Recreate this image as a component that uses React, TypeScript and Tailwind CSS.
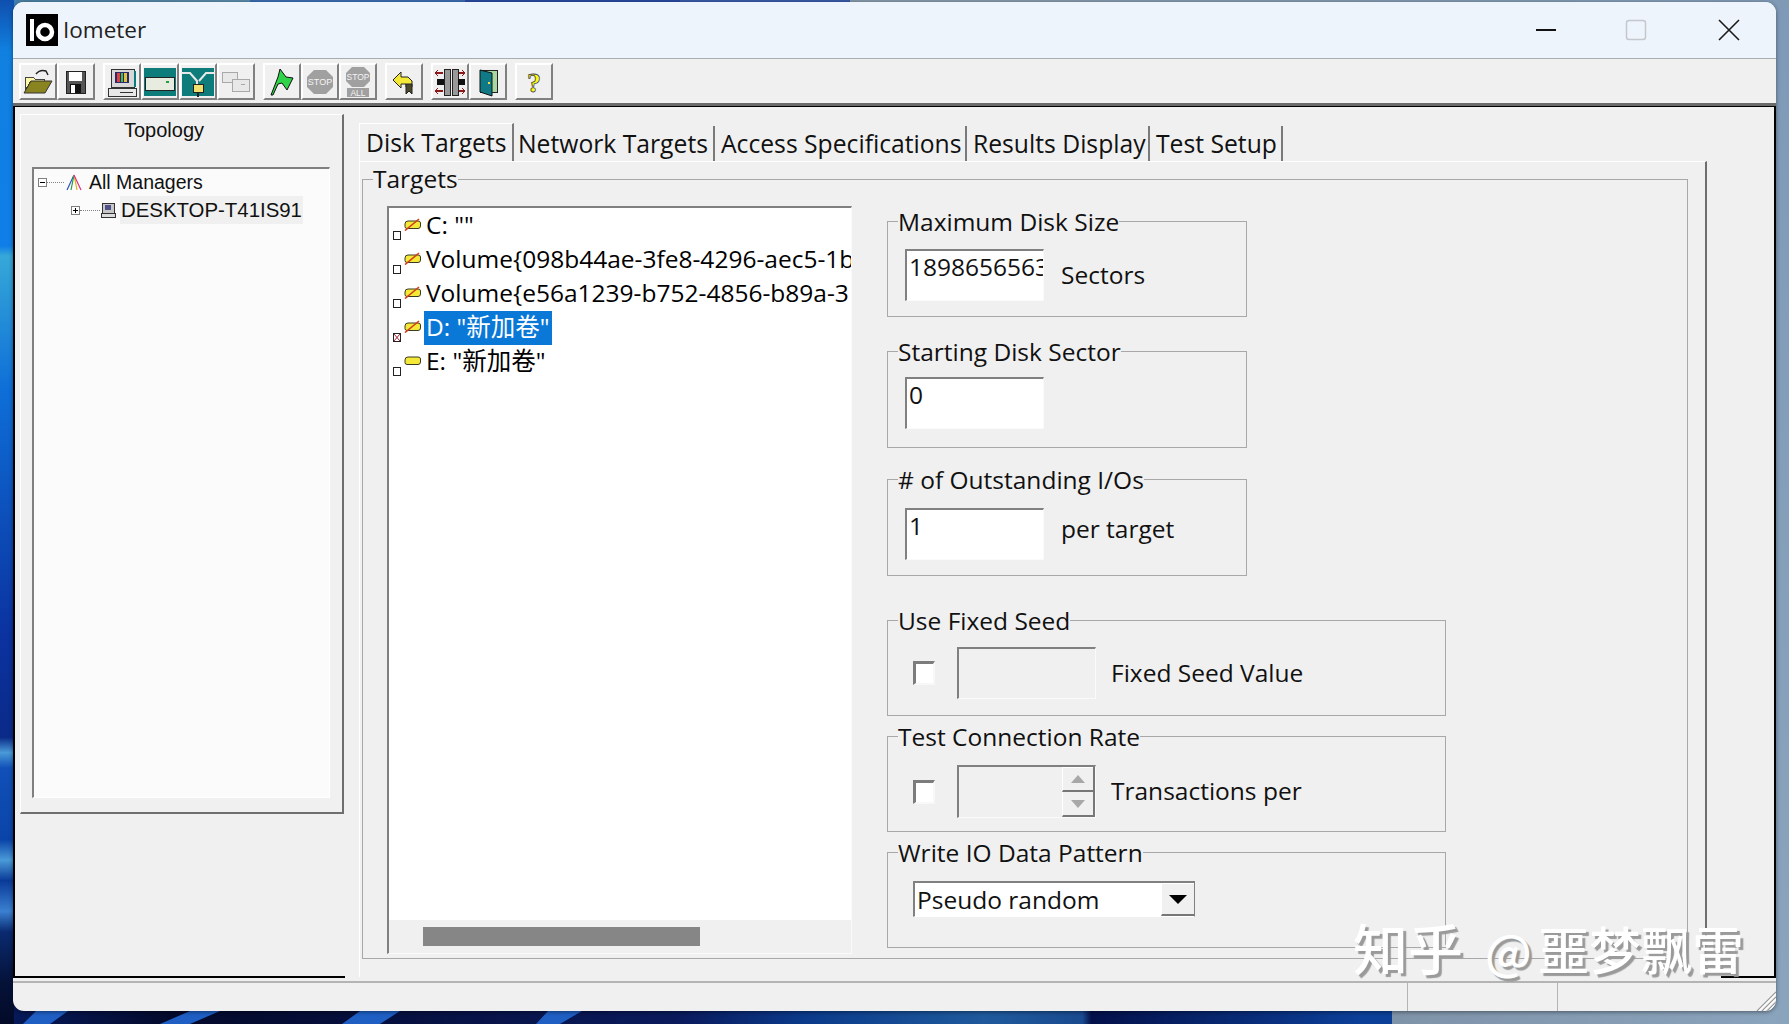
import React from "react";

const UI = "font-['Open_Sans','Noto_Sans_CJK_SC',sans-serif]";
const raised = "border-t-2 border-l-2 border-t-white border-l-white border-r-2 border-b-2 border-r-[#808080] border-b-[#808080]";

function ToolBtn({ children, ml = 0 }: { children: React.ReactNode; ml?: number }) {
  return (
    <div
      className={`flex h-[37px] w-[38px] items-center justify-center bg-[#f0f0f0] ${raised}`}
      style={ml ? { marginLeft: ml } : undefined}
    >
      <svg width="32" height="30" viewBox="0 0 32 30" shapeRendering="crispEdges">
        {children}
      </svg>
    </div>
  );
}

function Drive({ crossed }: { crossed?: boolean }) {
  return (
    <svg width="17" height="13" viewBox="0 0 17 13">
      <path d="M1 6 Q1 3 4 3 H14 Q16.5 3 16.5 5 V8 Q16.5 10.5 14 10.5 H3 Q1 10.5 1 8.5 Z" fill="#f4e838" stroke="#3a3a20" strokeWidth="1" />
      {crossed && <path d="M1 12.5 L15 1" stroke="#d2401a" strokeWidth="1.6" />}
    </svg>
  );
}

function Row({ text, crossed = true, checked, selected }: { text: string; crossed?: boolean; checked?: boolean; selected?: boolean }) {
  return (
    <div className="flex h-[34px] items-center whitespace-nowrap">
      <div className="relative mt-[20px] ml-[4px] h-[9px] w-[8px] shrink-0 border border-[#222] bg-white">
        {checked && (
          <svg className="absolute inset-0" width="6" height="7" viewBox="0 0 6 7">
            <path d="M0 0 L6 7 M6 0 L0 7" stroke="#a02030" strokeWidth="1" />
          </svg>
        )}
      </div>
      <div className="mb-[2px] ml-[3px] flex w-[20px] shrink-0 items-center">
        <Drive crossed={crossed} />
      </div>
      <div className={`flex h-[34px] items-center px-[2px] text-[24.5px] ${selected ? "bg-[#0a78d7] text-white" : "text-black"}`}>{text}</div>
    </div>
  );
}

function Group({ title, className, pad, top, children }: { title: string; className: string; pad: number; top: number; children?: React.ReactNode }) {
  return (
    <fieldset className={`min-w-0 border border-[#a8a8a8] ${className}`}>
      <legend className="ml-[10px] px-0 text-[24.5px] leading-[1] text-[#111]">{title}</legend>
      <div style={{ paddingLeft: pad, paddingTop: top }}>{children}</div>
    </fieldset>
  );
}

function Sunken({ className, children }: { className: string; children?: React.ReactNode }) {
  return (
    <div className={`overflow-hidden border-t-2 border-l-2 border-t-[#808080] border-l-[#808080] border-r border-b border-r-[#fafafa] border-b-[#fafafa] ${className}`}>
      {children}
    </div>
  );
}

function Check() {
  return <div className="h-[24px] w-[22px] shrink-0 border-t-[3px] border-l-[3px] border-t-[#7c7c7c] border-l-[#7c7c7c] border-r-2 border-b-2 border-r-[#f8f8f8] border-b-[#f8f8f8] bg-white" />;
}

function Tab({ label, w, active, pl = 6 }: { label: string; w: number; active?: boolean; pl?: number }) {
  return (
    <div
      className={`flex shrink-0 items-center whitespace-nowrap border-r-2 border-r-[#7a7a7a] text-[24.7px] text-[#111] ${active ? "h-[38px] border-t border-l border-t-white border-l-white" : "mt-[3px] h-[35px]"}`}
      style={{ width: w, paddingLeft: pl }}
    >
      {label}
    </div>
  );
}

export default function App() {
  return (
    <div className={`relative h-[1024px] w-[1789px] overflow-hidden ${UI}`}>
      <svg className="absolute inset-0" width="1789" height="1024" viewBox="0 0 1789 1024" preserveAspectRatio="none">
        <defs>
          <linearGradient id="bg" x1="0" y1="0" x2="1" y2="0">
            <stop offset="0" stopColor="#061a5c" />
            <stop offset="0.1" stopColor="#03092a" />
            <stop offset="0.38" stopColor="#0a1a5c" />
            <stop offset="0.45" stopColor="#0a3a8a" />
            <stop offset="0.55" stopColor="#1f5a9c" />
            <stop offset="0.605" stopColor="#1a4a90" />
            <stop offset="0.61" stopColor="#03104a" />
            <stop offset="0.76" stopColor="#0c3f98" />
            <stop offset="0.778" stopColor="#0c3f98" />
            <stop offset="0.778" stopColor="#7f93a8" />
            <stop offset="1" stopColor="#8aa4bd" />
          </linearGradient>
          <linearGradient id="left" x1="0" y1="0" x2="0" y2="1">
            <stop offset="0" stopColor="#0f4fae" />
            <stop offset="0.05" stopColor="#1080e0" />
            <stop offset="0.24" stopColor="#0f7ee8" />
            <stop offset="0.25" stopColor="#36a8d8" />
            <stop offset="0.38" stopColor="#0e6fd8" />
            <stop offset="0.62" stopColor="#0b32a0" />
            <stop offset="0.72" stopColor="#0a2a88" />
            <stop offset="0.735" stopColor="#4a9ad8" />
            <stop offset="0.75" stopColor="#1050b8" />
            <stop offset="0.82" stopColor="#0a44a8" />
            <stop offset="0.84" stopColor="#4a9ad8" />
            <stop offset="0.86" stopColor="#0a3a98" />
            <stop offset="0.89" stopColor="#3a80d0" />
            <stop offset="0.91" stopColor="#0a2a70" />
            <stop offset="0.96" stopColor="#051238" />
            <stop offset="1" stopColor="#030a28" />
          </linearGradient>
          <linearGradient id="top" x1="0" y1="0" x2="1" y2="0">
            <stop offset="0" stopColor="#1f7fe0" />
            <stop offset="0.012" stopColor="#4a7fa0" />
            <stop offset="0.14" stopColor="#5a8aa8" />
            <stop offset="0.14" stopColor="#3a6cb0" />
            <stop offset="0.26" stopColor="#3a6cb0" />
            <stop offset="0.26" stopColor="#2a4aa0" />
            <stop offset="0.38" stopColor="#2a4aa0" />
            <stop offset="0.38" stopColor="#3a5aa8" />
            <stop offset="0.475" stopColor="#3a5aa8" />
            <stop offset="0.475" stopColor="#8598a8" />
            <stop offset="1" stopColor="#7f9ab5" />
          </linearGradient>
          <linearGradient id="right" x1="0" y1="0" x2="0" y2="1">
            <stop offset="0" stopColor="#7f9ab8" />
            <stop offset="1" stopColor="#8aa4bd" />
          </linearGradient>
        </defs>
        <rect width="1789" height="1024" fill="url(#bg)" />
        <rect x="1776" width="13" height="1011" fill="url(#right)" />
        <rect width="1789" height="8" fill="url(#top)" />
        <rect width="14" height="1024" fill="url(#left)" />
        <path d="M23 1024 L36 1011 H68 L50 1024 Z M160 1024 L190 1011 H220 L190 1024 Z M342 1024 L360 1011 H400 L380 1024 Z M536 1024 L548 1011 H582 L560 1024 Z" fill="#1f5fc4" />
      </svg>

      <div className="relative ml-[13px] mt-[2px] flex h-[1009px] w-[1763px] flex-col overflow-hidden rounded-[11px] bg-[#f0f0f0] shadow-[0_1px_4px_rgba(0,0,0,0.45)]">
        {/* Title bar */}
        <div className="flex h-[57px] shrink-0 items-center border-b border-b-[#a9adb1] bg-[#eef4fb]">
          <div className="ml-[13px] flex h-[32px] w-[32px] items-center justify-center bg-black">
            <svg width="30" height="28" viewBox="0 0 30 28">
              <rect x="3" y="3" width="4" height="22" fill="#fff" />
              <circle cx="18" cy="16" r="7" fill="none" stroke="#fff" strokeWidth="4.5" />
            </svg>
          </div>
          <div className="ml-[5px] text-[22.5px] text-[#222]">Iometer</div>
          <div className="ml-auto flex items-center">
            <svg width="24" height="24" viewBox="0 0 24 24">
              <path d="M2 12 H22" stroke="#111" strokeWidth="2" />
            </svg>
            <svg className="ml-[67px]" width="22" height="22" viewBox="0 0 22 22">
              <rect x="1.5" y="1.5" width="19" height="19" rx="2.5" fill="none" stroke="#c4c8cd" strokeWidth="1.5" />
            </svg>
            <svg className="ml-[71px] mr-[36px]" width="22" height="22" viewBox="0 0 22 22">
              <path d="M1 1 L21 21 M21 1 L1 21" stroke="#1a1a1a" strokeWidth="1.6" />
            </svg>
          </div>
        </div>

        {/* Toolbar */}
        <div className="flex h-[47px] shrink-0 items-start border-b-[3px] border-b-[#6a6a6a] pl-[6px] pt-[4px]">
          <ToolBtn>
            <path d="M3 10 H11 L13 12 H22 V14 H9 L3 24 Z" fill="#fff8a8" stroke="#444" />
            <path d="M9 14 H30 L23 26 H2 Z" fill="#8a8420" stroke="#333" shapeRendering="auto" />
            <path d="M14 7 Q18 2 24 4 L26 8" fill="none" stroke="#222" strokeWidth="1.5" shapeRendering="auto" />
          </ToolBtn>
          <ToolBtn>
            <path d="M6 4 H25 V26 H6 Z" fill="#555" stroke="#222" />
            <rect x="9" y="5" width="13" height="9" fill="#fff" />
            <rect x="10" y="17" width="11" height="9" fill="#111" />
            <rect x="11" y="18" width="4" height="8" fill="#fff" />
          </ToolBtn>
          <ToolBtn ml={8}>
            <rect x="5" y="2" width="23" height="18" fill="#d8d8d8" stroke="#333" />
            <rect x="9" y="5" width="14" height="11" fill="#2a2a6a" />
            <rect x="11" y="6" width="3" height="9" fill="#e04040" />
            <rect x="15" y="6" width="2" height="9" fill="#40c040" />
            <rect x="18" y="6" width="3" height="9" fill="#e0c040" />
            <rect x="2" y="21" width="28" height="8" fill="#e8e8e8" stroke="#333" />
            <rect x="14" y="25" width="13" height="1" fill="#333" />
            <path d="M29 4 V20" stroke="#0c7b7b" strokeWidth="2" />
          </ToolBtn>
          <ToolBtn>
            <rect x="0" y="1" width="32" height="28" fill="#0e7c7b" />
            <rect x="1" y="10" width="29" height="13" fill="#e8ece0" stroke="#222" />
            <rect x="22" y="14" width="3" height="2" fill="#20a040" />
          </ToolBtn>
          <ToolBtn>
            <rect x="0" y="1" width="32" height="28" fill="#0e7c7b" />
            <path d="M0 6 H8 L15 14 V18 M32 6 H24 L17 14" fill="none" stroke="#e8e8e8" strokeWidth="2" shapeRendering="auto" />
            <rect x="11" y="17" width="10" height="8" fill="#efe070" stroke="#222" />
            <rect x="15" y="25" width="2" height="5" fill="#222" />
          </ToolBtn>
          <ToolBtn>
            <rect x="2" y="5" width="15" height="10" fill="#e8e8e8" stroke="#a8a8a8" />
            <rect x="12" y="12" width="17" height="12" fill="#e8e8e8" stroke="#a8a8a8" />
            <rect x="21" y="17" width="4" height="1" fill="#a8a8a8" />
          </ToolBtn>
          <ToolBtn ml={8}>
            <path d="M5 28 L12 10 L14 2 L20 10 L27 11 L21 23 L16 16 L12 17 L7 28 Z" fill="#2fd44a" stroke="#111" strokeWidth="1" shapeRendering="auto" />
          </ToolBtn>
          <ToolBtn>
            <path d="M10 3 H22 L29 10 V20 L22 27 H10 L3 20 V10 Z" fill="#a0a0a0" shapeRendering="auto" />
            <text x="16" y="18" textAnchor="middle" fontSize="9" fill="#f4f4f4" fontFamily="Liberation Sans">STOP</text>
          </ToolBtn>
          <ToolBtn>
            <path d="M10 0 H22 L28 6 V14 L22 20 H10 L4 14 V6 Z" fill="#a0a0a0" shapeRendering="auto" />
            <text x="16" y="13" textAnchor="middle" fontSize="8.5" fill="#f4f4f4" fontFamily="Liberation Sans">STOP</text>
            <rect x="5" y="21" width="22" height="9" fill="#a0a0a0" />
            <text x="16" y="29" textAnchor="middle" fontSize="8.5" fill="#f4f4f4" fontFamily="Liberation Sans">ALL</text>
          </ToolBtn>
          <ToolBtn ml={8}>
            <path d="M5 13 L13 5 V10 H20 L24 14 V20 H18 V17 H13 V21 Z" fill="#f4e838" stroke="#222" shapeRendering="auto" />
            <path d="M18 17 H24 V27 L21 24 L18 27 Z" fill="#4a4a2a" stroke="#222" shapeRendering="auto" />
          </ToolBtn>
          <ToolBtn ml={8}>
            <rect x="10" y="2" width="6" height="26" fill="#999" stroke="#222" />
            <rect x="18" y="2" width="6" height="26" fill="#999" stroke="#222" />
            <rect x="3" y="12" width="7" height="6" fill="#111" />
            <rect x="24" y="12" width="7" height="6" fill="#111" />
            <path d="M2 6 H9 M2 24 H9 M25 6 H31 M25 24 H31" stroke="#8a1a1a" strokeWidth="2" />
            <path d="M4 3 L1 6 L4 9 M4 21 L1 24 L4 27 M28 3 L31 6 L28 9 M28 21 L31 24 L28 27" stroke="#8a1a1a" fill="none" shapeRendering="auto" />
          </ToolBtn>
          <ToolBtn>
            <path d="M8 3 H25 V25 H8 Z" fill="#a8d8a0" stroke="#222" />
            <path d="M8 3 L20 6 V29 L8 25 Z" fill="#0f7a86" stroke="#111" shapeRendering="auto" />
            <rect x="16" y="15" width="2" height="2" fill="#f0e040" />
          </ToolBtn>
          <ToolBtn ml={8}>
            <text x="16" y="25" textAnchor="middle" fontSize="28" fontWeight="700" fill="#ffff10" stroke="#444" strokeWidth="0.8" fontFamily="Liberation Serif">?</text>
          </ToolBtn>
        </div>

        {/* Client */}
        <div className="flex h-[872px] shrink-0 items-start border-l-2 border-r-2 border-t border-l-black border-r-black border-t-black">
          {/* Topology panel */}
          <div className="ml-[5px] mt-[7px] h-[700px] w-[324px] shrink-0 border-t border-l border-t-white border-l-white border-r-2 border-b-2 border-r-[#6e6e6e] border-b-[#6e6e6e] font-['Liberation_Sans',sans-serif]">
            <div className="mt-[3px] ml-[7px] w-[272px] text-center text-[20px] leading-[24px] text-[#111]">Topology</div>
            <div className="ml-[11px] mt-[25px] h-[631px] w-[298px] border-t-2 border-l-2 border-t-[#808080] border-l-[#808080] border-r border-b border-r-white border-b-white bg-[#fbfbfb]">
              <div className="flex h-[27px] items-center text-[19.5px] text-[#111]">
                <div className="ml-[4px] flex h-[9px] w-[9px] items-center justify-center border border-[#808080] bg-white">
                  <div className="h-px w-[5px] bg-black" />
                </div>
                <div className="w-[17px] border-t border-dotted border-[#808080]" />
                <svg width="20" height="18" viewBox="0 0 20 18">
                  <path d="M10 1 L3 16" stroke="#3050c0" strokeWidth="1.2" />
                  <path d="M10 1 L7 16" stroke="#20a040" strokeWidth="1.2" />
                  <path d="M10 1 L13 16" stroke="#e0b020" strokeWidth="1.2" />
                  <path d="M10 1 L17 16" stroke="#e03080" strokeWidth="1.2" />
                </svg>
                <div className="ml-[5px]">All Managers</div>
              </div>
              <div className="flex h-[28px] items-center text-[20.4px] text-[#111]">
                <div className="ml-[37px] flex h-[9px] w-[9px] items-center justify-center border border-[#808080] bg-white text-[9px] leading-none">
                  <svg width="7" height="7" viewBox="0 0 7 7"><path d="M1 3.5 H6 M3.5 1 V6" stroke="#000" /></svg>
                </div>
                <div className="w-[20px] border-t border-dotted border-[#808080]" />
                <svg width="16" height="16" viewBox="0 0 16 16" shapeRendering="crispEdges">
                  <rect x="2" y="1" width="12" height="10" fill="#c8c8c8" stroke="#333" />
                  <rect x="5" y="3" width="6" height="5" fill="#50508a" />
                  <rect x="1" y="11" width="14" height="4" fill="#ddd" stroke="#333" />
                </svg>
                <div className="ml-[4px] flex h-[28px] items-center bg-[#f0f0f0] px-[1px]">DESKTOP-T41IS91</div>
              </div>
            </div>
          </div>

          {/* Tab area */}
          <div className="ml-[15px] mt-[16px] w-[1348px] shrink-0">
            <div className="flex h-[38px] items-start">
              <Tab label="Disk Targets" w={155} active />
              <Tab label="Network Targets" w={201} pl={4} />
              <Tab label="Access Specifications" w={252} />
              <Tab label="Results Display" w={183} />
              <Tab label="Test Setup" w={133} />
            </div>
            <div className="relative flex h-[816px] border-t border-l border-t-white border-l-white border-r-2 border-r-[#6e6e6e]">
              {/* Targets */}
              <fieldset className="ml-[2px] mt-[5px] h-[792px] w-[1326px] min-w-0 border border-[#a8a8a8]">
                <legend className="ml-[10px] text-[24.5px] leading-[1] text-[#111]">Targets</legend>
                <div className="flex items-start pl-[24px] pt-[14px]">
                  {/* list */}
                  <div className="h-[748px] w-[465px] shrink-0 border-t-2 border-l-2 border-t-[#808080] border-l-[#808080] border-r border-b border-r-[#fafafa] border-b-[#fafafa]">
                    <div className="h-[712px] overflow-hidden bg-white pt-px">
                      <Row text={'C: ""'} />
                      <Row text="Volume{098b44ae-3fe8-4296-aec5-1b" />
                      <Row text="Volume{e56a1239-b752-4856-b89a-3" />
                      <Row text={'D: "新加卷"'} checked selected />
                      <Row text={'E: "新加卷"'} crossed={false} />
                    </div>
                    <div className="pl-[34px] pt-[7px]">
                      <div className="h-[19px] w-[277px] bg-[#868686]" />
                    </div>
                  </div>

                  {/* right column */}
                  <div className="ml-[35px] mt-[4px] flex w-[559px] shrink-0 flex-col">
                    <Group title="Maximum Disk Size" className="h-[107px] w-[360px]" pad={17} top={15}>
                      <div className="flex items-center">
                        <Sunken className="h-[52px] w-[139px] bg-white pl-[2px] text-[24.5px] leading-[32px] text-[#111]">1898656563</Sunken>
                        <div className="ml-[17px] text-[24.5px] text-[#111]">Sectors</div>
                      </div>
                    </Group>
                    <Group title="Starting Disk Sector" className="mt-[23px] h-[108px] w-[360px]" pad={17} top={13}>
                      <Sunken className="h-[52px] w-[139px] bg-white pl-[2px] text-[24.5px] leading-[32px] text-[#111]">0</Sunken>
                    </Group>
                    <Group title="# of Outstanding I/Os" className="mt-[20px] h-[108px] w-[360px]" pad={17} top={16}>
                      <div className="flex items-center">
                        <Sunken className="h-[52px] w-[139px] bg-white pl-[2px] text-[24.5px] leading-[32px] text-[#111]">1</Sunken>
                        <div className="mb-[10px] ml-[17px] text-[24.5px] text-[#111]">per target</div>
                      </div>
                    </Group>
                    <Group title="Use Fixed Seed" className="mt-[33px] h-[107px] w-[559px]" pad={25} top={14}>
                      <div className="flex items-center">
                        <Check />
                        <Sunken className="ml-[22px] h-[52px] w-[139px]" />
                        <div className="ml-[15px] text-[24.5px] text-[#111]">Fixed Seed Value</div>
                      </div>
                    </Group>
                    <Group title="Test Connection Rate" className="mt-[9px] h-[107px] w-[559px]" pad={25} top={16}>
                      <div className="flex items-center">
                        <Check />
                        <Sunken className="ml-[22px] flex h-[53px] w-[139px] justify-end">
                          <div className="flex w-[33px] flex-col border-r-2 border-r-[#777]">
                            <div className="flex h-[25px] items-center justify-center border-l border-l-white border-t border-t-white border-b-2 border-b-[#777]">
                              <div className="h-0 w-0 border-x-[7px] border-b-[8px] border-x-transparent border-b-[#a8a8a8]" />
                            </div>
                            <div className="flex flex-1 items-center justify-center border-l border-l-white border-b-2 border-b-[#777]">
                              <div className="h-0 w-0 border-x-[7px] border-t-[8px] border-x-transparent border-t-[#a8a8a8]" />
                            </div>
                          </div>
                        </Sunken>
                        <div className="ml-[15px] text-[24.5px] text-[#111]">Transactions per</div>
                      </div>
                    </Group>
                    <Group title="Write IO Data Pattern" className="mt-[9px] h-[107px] w-[559px]" pad={25} top={16}>
                      <div className="flex h-[36px] w-[282px] border-t-2 border-l-2 border-t-[#808080] border-l-[#808080] bg-white border-b border-r border-b-white border-r-[#808080]">
                        <div className="flex-1 pl-[2px] text-[24.5px] leading-[33px] text-[#111]">Pseudo random</div>
                        <div className="flex w-[33px] items-center justify-center border-t border-l border-t-white border-l-white border-b-2 border-b-[#777] bg-[#f0f0f0]">
                          <div className="h-0 w-0 border-x-[9px] border-t-[9px] border-x-transparent border-t-black" />
                        </div>
                      </div>
                    </Group>
                  </div>
                </div>
              </fieldset>
            </div>
          </div>
        </div>

        {/* bottom lines of the client */}
        <div className="ml-[1px] mr-[2px] flex h-0 shrink-0 justify-between">
          <div className="-mt-[2px] h-[2px] w-[331px] bg-black" />
          <div className="-mt-[2px] h-[2px] w-[53px] bg-black" />
        </div>

        {/* Status bar */}
        <div className="mt-[3px] flex flex-1 border-t-2 border-t-[#b4b4b4]">
          <div className="w-[1395px] border-r border-r-[#b4b4b4]" />
          <div className="w-[150px] border-r border-r-[#b4b4b4]" />
          <div className="relative flex-1">
            <svg className="absolute bottom-0 right-0" width="20" height="20" viewBox="0 0 20 20">
              <path d="M20 1 L1 20 M20 6 L6 20 M20 11 L11 20" stroke="#9a9a9a" strokeWidth="1.2" />
              <path d="M20 3 L3 20 M20 8 L8 20 M20 13 L13 20" stroke="#fff" strokeWidth="1.2" />
            </svg>
          </div>
        </div>

        {/* Watermark */}
        <div className="absolute left-[1340px] top-[914px] flex items-baseline whitespace-nowrap font-['Noto_Sans_CJK_SC',sans-serif] font-medium leading-[60px] text-white [text-shadow:3px_3px_1px_#9a9a9a]">
          <span className="text-[55px]">知乎</span>
          <span className="ml-[22px] text-[48px]">@</span>
          <span className="ml-[6px] text-[51.5px]">噩梦飘雷</span>
        </div>
      </div>
    </div>
  );
}
